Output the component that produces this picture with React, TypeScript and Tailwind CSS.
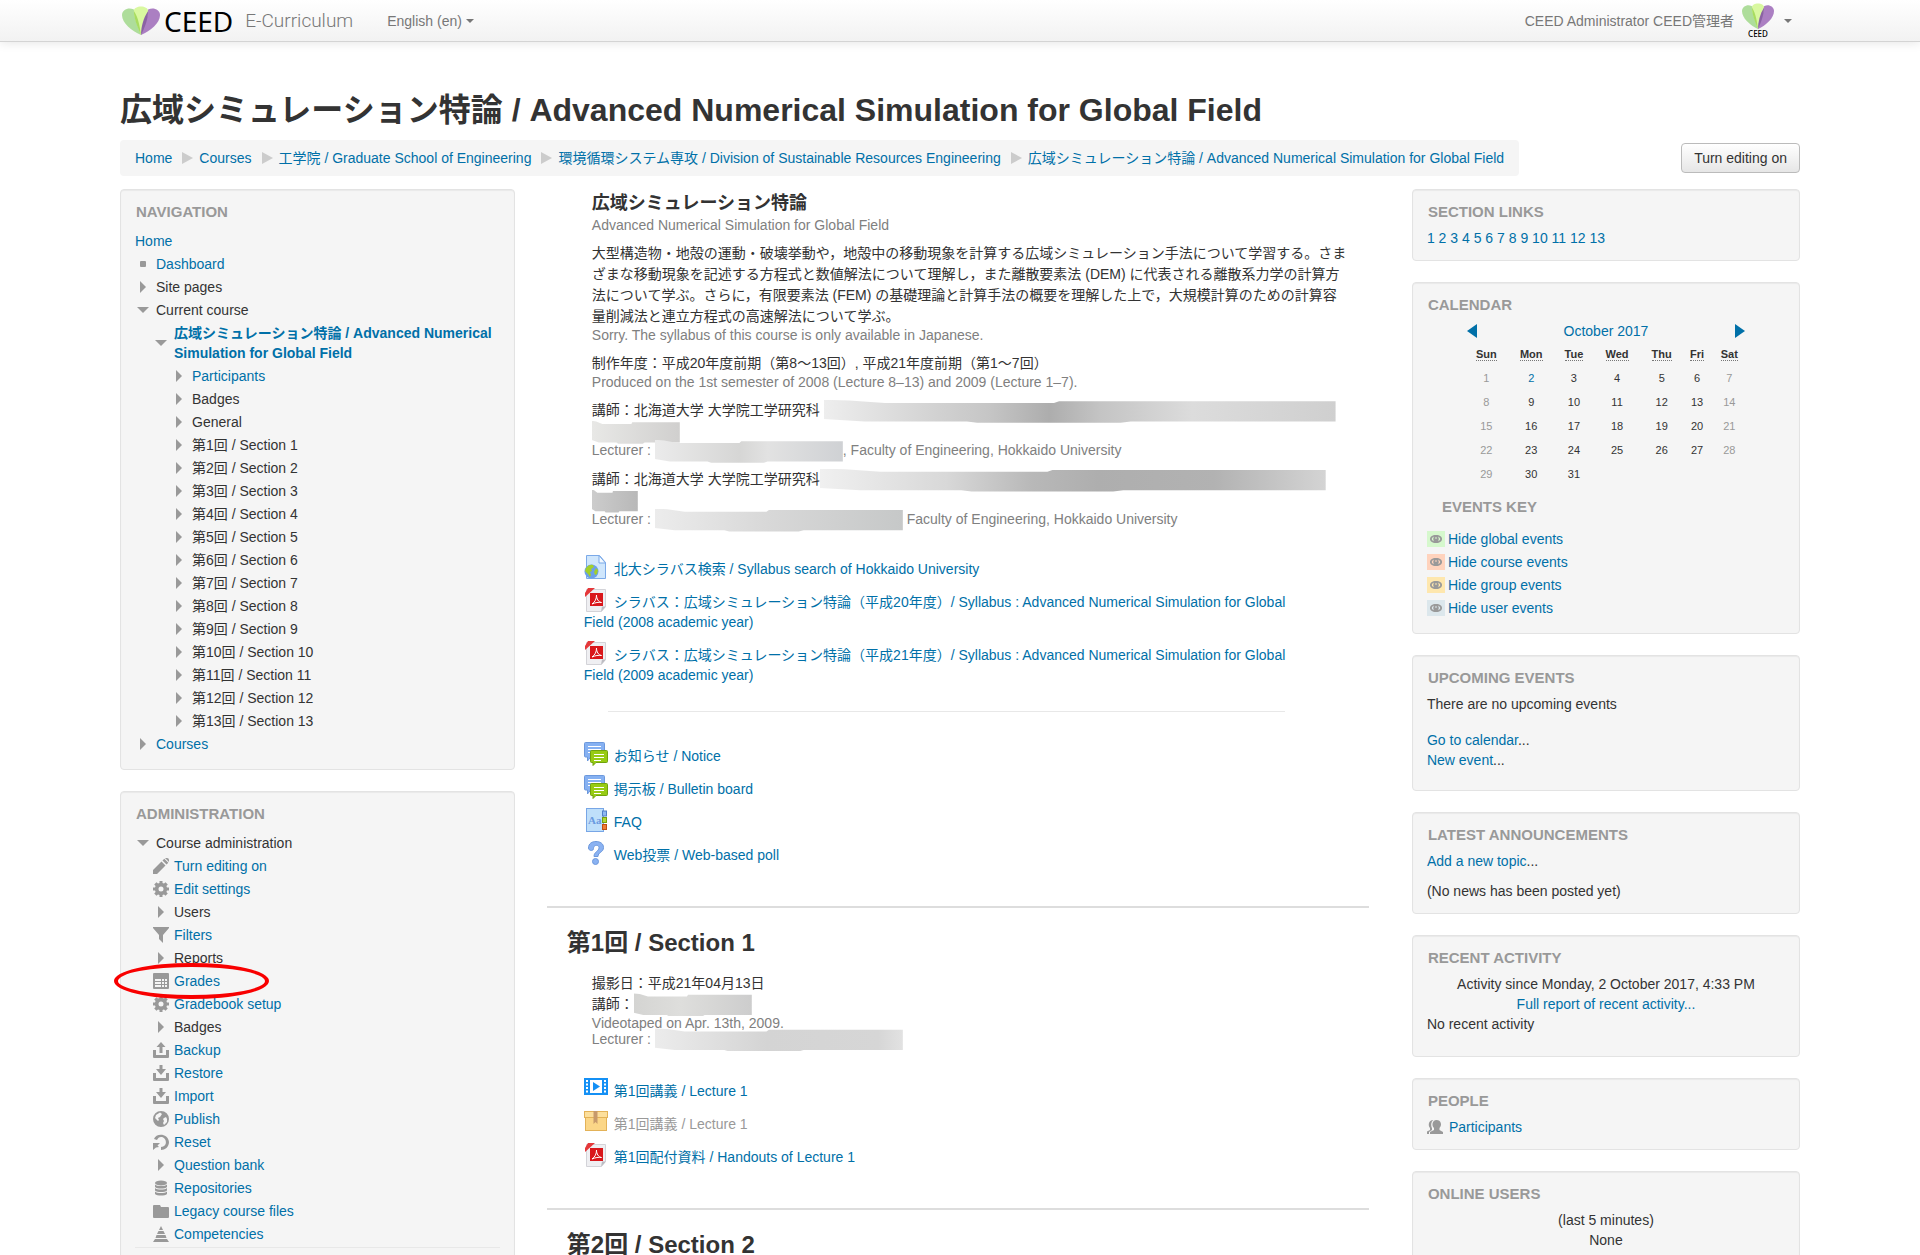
import type { ReactNode } from "react";

const LINK = "text-[#0070a8] hover:underline";

const JP_TITLE = "広域シミュレーション特論";

const CRUMBS = [
  "Home",
  "Courses",
  "工学院 / Graduate School of Engineering",
  "環境循環システム専攻 / Division of Sustainable Resources Engineering",
  "広域シミュレーション特論 / Advanced Numerical Simulation for Global Field",
];

const ADMIN_ITEMS: { icon: IconName; label: string; plain?: boolean }[] = [
  { icon: "pencil", label: "Turn editing on" },
  { icon: "gear", label: "Edit settings" },
  { icon: "right", label: "Users", plain: true },
  { icon: "filter", label: "Filters" },
  { icon: "right", label: "Reports", plain: true },
  { icon: "grid", label: "Grades" },
  { icon: "gear", label: "Gradebook setup" },
  { icon: "right", label: "Badges", plain: true },
  { icon: "upload", label: "Backup" },
  { icon: "download", label: "Restore" },
  { icon: "download", label: "Import" },
  { icon: "globe", label: "Publish" },
  { icon: "reset", label: "Reset" },
  { icon: "right", label: "Question bank" },
  { icon: "database", label: "Repositories" },
  { icon: "folder", label: "Legacy course files" },
  { icon: "pyramid", label: "Competencies" },
];

const WEEKDAYS = ["Sun", "Mon", "Tue", "Wed", "Thu", "Fri", "Sat"];
const WEEKS = [0, 1, 2, 3, 4].map((w) =>
  [1, 2, 3, 4, 5, 6, 7].map((d) => w * 7 + d),
);

const EVENT_KEYS = [
  { label: "Hide global events", color: "bg-[#d6f8cd]" },
  { label: "Hide course events", color: "bg-[#ffd3bd]" },
  { label: "Hide group events", color: "bg-[#fee7ae]" },
  { label: "Hide user events", color: "bg-[#dce7ec]" },
];

type IconName =
  | "right"
  | "down"
  | "square"
  | "pencil"
  | "gear"
  | "filter"
  | "grid"
  | "upload"
  | "download"
  | "globe"
  | "reset"
  | "database"
  | "folder"
  | "pyramid"
  | "people"
  | "eye";

const ICONS: Record<IconName, ReactNode> = {
  right: <path d="M5 2l6 6-6 6z" />,
  down: <path d="M2 5h12l-6 6z" />,
  square: <rect x="5" y="5" width="6" height="6" rx="1" />,
  pencil: (
    <path d="M0 16v-4l8.500-8.500 4 4L4 16zM9.500 2.500l1.800-1.800 4 4-1.800 1.800zM12 0h2a2 2 0 0 1 2 2v2z" />
  ),
  gear: (
    <path
      fillRule="evenodd"
      d="M6.500 0h3v2l1.500.6L12.500 1.200l2.300 2.300-1.400 1.500.6 1.500h2v3h-2l-.6 1.500 1.400 1.500-2.300 2.300-1.500-1.400-1.500.6v2h-3v-2L5 13.400l-1.500 1.400-2.300-2.300L2.600 11 2 9.500H0v-3h2L2.600 5 1.200 3.500l2.300-2.300L5 2.600 6.500 2zM8 5.500a2.500 2.500 0 1 0 0 5 2.500 2.500 0 0 0 0-5z"
    />
  ),
  filter: <path d="M0 0h16v1l-6 7v8l-4-4V8L0 1z" />,
  grid: (
    <path
      fillRule="evenodd"
      d="M1 0h14a1 1 0 0 1 1 1v14a1 1 0 0 1-1 1H1a1 1 0 0 1-1-1V1a1 1 0 0 1 1-1zM2 6v2h6V6zm7 0v2h2V6zm3 0v2h2V6zM2 9v2h6V9zm7 0v2h2V9zm3 0v2h2V9zM2 12v2h6v-2zm7 0v2h2v-2zm3 0v2h2v-2z"
    />
  ),
  upload: (
    <path d="M8 0l4.500 5H9.500v6h-3V5h-3zM0 8h3v5h10V8h3v7a1 1 0 0 1-1 1H1a1 1 0 0 1-1-1z" />
  ),
  download: (
    <path d="M6.500 0h3v4h3.500l-5 6-5-6h3.500zM0 8h3v5h10V8h3v7a1 1 0 0 1-1 1H1a1 1 0 0 1-1-1z" />
  ),
  globe: (
    <path
      fillRule="evenodd"
      d="M8 0a8 8 0 1 1 0 16A8 8 0 0 1 8 0zM3 4l4-2.500L9 3 7 6 5 7l1 2-1 1-3-3zm10 2l1 2v3l-3 3-1-2 1-2-1-2 1-1z"
    />
  ),
  reset: (
    <path d="M1 5C3-1 15-1 16 8c0 5-4 8-8 8v-3c7 0 6-10 0-10-2 0-3 1-4 3zM0 9h7l-2.500 2.500L6 13l-3 .5L0 16z" />
  ),
  database: (
    <g>
      <ellipse cx="8" cy="3" rx="6" ry="2.500" />
      <path d="M2 4.500c2 2 10 2 12 0v2.500c-2 2-10 2-12 0zM2 8c2 2 10 2 12 0v2.500c-2 2-10 2-12 0zM2 11.500c2 2 10 2 12 0V14c-2 2-10 2-12 0z" />
    </g>
  ),
  folder: (
    <path d="M0 3a1 1 0 0 1 1-1h6l1 2h7a1 1 0 0 1 1 1v9a1 1 0 0 1-1 1H1a1 1 0 0 1-1-1z" />
  ),
  pyramid: (
    <path d="M8 0l2 4H6zM5.500 5h5l1.500 3H4zM3.500 9h9l1 3h-11zM2 13h12l2 3H0z" />
  ),
  people: (
    <g>
      <path d="M0 15v-2.500L3 11V9C1 7 1 1 6.500 1 3.500 3 4 7 5 9v2l-3 2v2z" />
      <path d="M3 15v-2l4-2V9C4.500 7 5 1 9.500 1s6 5 3 8v2l3.500 2v2z" />
    </g>
  ),
  eye: (
    <path
      fillRule="evenodd"
      d="M8 4c4 0 6 2 6 4s-2 4-6 4-6-2-6-4 2-4 6-4zM6 5.800C4.500 6.200 3.800 7 3.800 8s.7 1.800 2.200 2.200C5 9 5 7 6 5.800zm4 0c1 1.200 1 3.200 0 4.400 1.500-.4 2.200-1.200 2.200-2.200S11.500 6.200 10 5.800zM7.500 6v2h1V6z"
    />
  ),
};

function Icon({ name }: { name: IconName }) {
  return (
    <svg viewBox="0 0 16 16" className="size-4 shrink-0 fill-[#999]" aria-hidden>
      {ICONS[name]}
    </svg>
  );
}

function Petals({ className }: { className: string }) {
  return (
    <svg
      viewBox="0 0 32 29"
      preserveAspectRatio="none"
      className={className}
      aria-hidden
    >
      <path d="M16 29C8 25 0 17 0 9c0-7 9-9 12-3 2 5 4 15 4 23z" fill="#aedd9b" />
      <path d="M16 29c8-4 16-12 16-20 0-7-9-9-12-3-2 5-4 15-4 23z" fill="#ab7fc2" />
      <path d="M16 29C13 20 10 11 10 5c0-6 12-6 12 0 0 6-4 15-6 24z" fill="#d9f8a0" />
      <path d="M10 5c0 7 3 16 6 24-1-8-2-17-6-24z" fill="#a8dc60" />
      <path d="M22 5c-4 7-6 16-6 24 3-7 6-16 6-24z" fill="#8b62a4" />
    </svg>
  );
}

type ActivityName =
  | "url"
  | "pdf"
  | "forum"
  | "glossary"
  | "choice"
  | "video"
  | "box";

const ACTIVITY_ICONS: Record<ActivityName, ReactNode> = {
  url: (
    <g>
      <path d="M2.500.5h13l6 7v16h-19z" fill="#cfe6fc" stroke="#7ba9e8" />
      <path d="M15 .5V8h6.500z" fill="#f2f9ff" stroke="#7ba9e8" />
      <circle cx="7.500" cy="16.500" r="7" fill="#6ba0ea" />
      <path
        d="M2 13c2-3 5-4 7-3l1 2-3 2 1 2-2 1 1 3-1 2-2-3-3-3zM12 13l2 2-1 4-2 1-1-3z"
        fill="#a3cf2a"
      />
    </g>
  ),
  pdf: (
    <g>
      <path d="M2.500 1.500h19v17l-4 5h-15z" fill="#efeff2" stroke="#d3d3d8" />
      <path d="M17 23.500l1-5h4z" fill="#bcbcc2" />
      <path d="M4 0h7L1 9V5z" fill="#e5383a" />
      <rect x="6" y="5" width="13" height="13" fill="#d9171b" />
      <path
        d="M8 16c3-2 4.500-5 4.500-9 0 4 2 7 5 7.500-3-.5-6 0-9.500 1.500z"
        fill="none"
        stroke="#fff"
      />
    </g>
  ),
  forum: (
    <g>
      <path
        d="M1.500.5h18a1 1 0 0 1 1 1v13H7L3.500 19v-4H1.500a1 1 0 0 1-1-1V1.500a1 1 0 0 1 1-1z"
        fill="#86b1f2"
        stroke="#6c98dc"
      />
      <path d="M4 4.500h13M4 7.500h13M4 10.500h6" stroke="#fff" />
      <path
        d="M7.500 8.500h15a1 1 0 0 1 1 1v10a1 1 0 0 1-1 1H12L9 23.500v-3H7.500a1 1 0 0 1-1-1v-10a1 1 0 0 1 1-1z"
        fill="#97cb13"
        stroke="#70a30c"
      />
      <path d="M10 12.500h10M10 15.500h10M10 18.500h7" stroke="#fff" />
    </g>
  ),
  glossary: (
    <g>
      <rect x="2.500" y=".5" width="17" height="23" fill="#bfdffa" stroke="#78a6e6" />
      <rect x="18.500" y="3" width="4" height="5" fill="#8fb8f3" stroke="#527fc8" />
      <rect x="18.500" y="9.500" width="4" height="5" fill="#b2d835" stroke="#74a010" />
      <rect x="18.500" y="16.500" width="4" height="5" fill="#ee7b36" stroke="#c04e10" />
      <text
        x="4"
        y="16"
        fontSize="11"
        fontWeight="700"
        fontFamily="Liberation Serif, serif"
        fill="#6a9ae0"
      >
        Aa
      </text>
    </g>
  ),
  choice: (
    <g fill="#8ab2f2" stroke="#6c98dc">
      <path d="M4.500 7C4.500 2.500 8 .5 12 .5s7.500 2 7.500 6c0 5-5.500 4.500-5.500 9h-4c0-5 5-5 5-9 0-3-5.500-3-5.500 1 0 3-5 2.500-5-.5z" />
      <circle cx="11.500" cy="20.500" r="3" />
    </g>
  ),
  video: (
    <g>
      <rect y="1" width="24" height="17" fill="#1490f5" />
      <rect x="6" y="3" width="12" height="13" fill="#fff" />
      <path d="M9 5l7 4.500L9 14z" fill="#1490f5" />
      <path
        d="M3 3v13M21 3v13"
        stroke="#fff"
        strokeWidth="2"
        strokeDasharray="2 1.500"
      />
    </g>
  ),
  box: (
    <g>
      <rect x="1.500" y="6" width="21" height="14.500" fill="#fbd687" stroke="#e3b258" />
      <rect x=".5" y="1.500" width="23" height="6" fill="#fcdf9c" stroke="#e3b258" />
      <path d="M9.500 1h4v13l-2-2-2 2z" fill="#c79a6b" />
    </g>
  ),
};

function Activity({
  icon,
  label,
  dimmed,
}: {
  icon: ActivityName;
  label: string;
  dimmed?: boolean;
}) {
  return (
    <li className="pb-[9px]">
      <a href="#" className={dimmed ? "text-[#999]" : LINK}>
        <svg
          viewBox="0 0 24 24"
          className="mr-[6px] inline-block size-6 align-[-5px]"
          aria-hidden
        >
          {ACTIVITY_ICONS[icon]}
        </svg>
        {label}
      </a>
    </li>
  );
}

function Block({
  title,
  className = "",
  children,
}: {
  title: string;
  className?: string;
  children: ReactNode;
}) {
  return (
    <section
      className={`rounded border border-[#e3e3e3] bg-[#f5f5f5] px-[14px] pt-3 shadow-[inset_0_1px_1px_rgba(0,0,0,0.05)] ${className}`}
    >
      <h2 className="pl-px text-[15px] leading-5 font-bold text-[#999] uppercase">
        {title}
      </h2>
      {children}
    </section>
  );
}

function TreeItem({
  icon,
  label,
  link,
  bold,
}: {
  icon: IconName;
  label: string;
  link?: boolean;
  bold?: boolean;
}) {
  return (
    <div className="flex items-center gap-[5px] pb-[3px]">
      <Icon name={icon} />
      {link ? (
        <a href="#" className={bold ? "font-bold text-[#0070a8]" : LINK}>
          {label}
        </a>
      ) : (
        <span>{label}</span>
      )}
    </div>
  );
}

// Smudge that hides a personal name
function Redacted({ className }: { className: string }) {
  return (
    <span
      className={`-my-1 inline-block h-[23px] align-middle [clip-path:polygon(0_0,5%_3%,12%_14%,45%_14%,46%_6%,100%_6%,100%_94%,60%_94%,58%_100%,30%_100%,28%_94%,8%_94%,0_84%)] ${className}`}
    />
  );
}

function Header() {
  return (
    <header className="border-b border-[#d4d4d4] bg-linear-to-b from-white to-[#f2f2f2] px-[120px] text-[#777] shadow-[0_1px_10px_rgba(0,0,0,0.1)]">
      <div className="flex h-[41px] items-center">
        <a href="#" className="flex items-center pl-[2px]">
          <Petals className="mr-1 h-[29px] w-[38px]" />
          <span className="font-['Noto_Sans'] text-[28px] leading-8 text-black">
            CEED
          </span>
          <span className="ml-3 font-['Roboto'] text-[19px] font-light">
            E-Curriculum
          </span>
        </a>
        <button className="ml-[34px] flex items-center gap-1">
          English (en)
          <span className="border-x-4 border-t-4 border-x-transparent border-t-[#777]" />
        </button>
        <button className="ml-auto flex items-center pr-2">
          CEED Administrator CEED管理者
          <span className="ml-2 flex w-8 flex-col items-center">
            <Petals className="h-[26px] w-8" />
            <span className="font-['Noto_Sans'] text-[8px] leading-[10px] font-medium text-black">
              CEED
            </span>
          </span>
          <span className="ml-[10px] border-x-4 border-t-4 border-x-transparent border-t-[#777]" />
        </button>
      </div>
    </header>
  );
}

function Navigation() {
  return (
    <Block title="Navigation" className="pb-3">
      <nav className="pt-[9px]">
        <a href="#" className={`block pb-[3px] ${LINK}`}>
          Home
        </a>
        <TreeItem icon="square" label="Dashboard" link />
        <TreeItem icon="right" label="Site pages" />
        <TreeItem icon="down" label="Current course" />
        <div className="pl-[18px]">
          <TreeItem
            icon="down"
            label={`${JP_TITLE} / Advanced Numerical Simulation for Global Field`}
            link
            bold
          />
          <div className="pl-[18px]">
            <TreeItem icon="right" label="Participants" link />
            <TreeItem icon="right" label="Badges" />
            <TreeItem icon="right" label="General" />
            {Array.from({ length: 13 }, (_, i) => (
              <TreeItem
                key={i}
                icon="right"
                label={`第${i + 1}回 / Section ${i + 1}`}
              />
            ))}
          </div>
        </div>
        <TreeItem icon="right" label="Courses" link />
      </nav>
    </Block>
  );
}

function Administration() {
  return (
    <Block title="Administration" className="pb-10">
      <div className="pt-[9px]">
        <TreeItem icon="down" label="Course administration" />
        <div className="pl-[18px]">
          {ADMIN_ITEMS.map((item) => (
            <div key={item.label} className="relative">
              <TreeItem icon={item.icon} label={item.label} link={!item.plain} />
              {item.label === "Grades" && (
                <span className="absolute -top-2 -left-[39px] z-10 h-9 w-[155px] rounded-[50%] border-4 border-[#f80000]" />
              )}
            </div>
          ))}
        </div>
        <hr className="border-[#e8e8e8]" />
      </div>
    </Block>
  );
}

function Calendar() {
  return (
    <Block title="Calendar" className="pb-3">
      <div className="pt-[6px] pr-[38px] pl-[38px]">
        <div className="flex items-center justify-between px-[2px] pb-px">
          <a
            href="#"
            aria-label="Previous month"
            className="border-y-[7px] border-r-[10px] border-y-transparent border-r-[#0070a8]"
          />
          <a href="#" className={LINK}>
            October 2017
          </a>
          <a
            href="#"
            aria-label="Next month"
            className="border-y-[7px] border-l-[10px] border-y-transparent border-l-[#0070a8]"
          />
        </div>
        <table className="w-full text-center text-[11px]">
          <thead>
            <tr>
              {WEEKDAYS.map((day) => (
                <th key={day} className="h-6 font-bold">
                  <abbr
                    title={day}
                    className="border-b border-dotted border-[#777] no-underline"
                  >
                    {day}
                  </abbr>
                </th>
              ))}
            </tr>
          </thead>
          <tbody>
            {WEEKS.map((week) => (
              <tr key={week[0]}>
                {week.map((day, i) => (
                  <td
                    key={day}
                    className={`h-6 ${i === 0 || i === 6 ? "text-[#999]" : ""}`}
                  >
                    {day === 2 ? (
                      <a href="#" className={LINK}>
                        2
                      </a>
                    ) : (
                      day <= 31 && day
                    )}
                  </td>
                ))}
              </tr>
            ))}
          </tbody>
        </table>
      </div>
      <h3 className="pt-[11px] pl-[15px] text-[15px] leading-5 font-bold text-[#999]">
        EVENTS KEY
      </h3>
      <ul className="pt-3">
        {EVENT_KEYS.map((key) => (
          <li key={key.label} className="flex items-center gap-[3px] pb-[3px]">
            <span className={`px-px ${key.color}`}>
              <Icon name="eye" />
            </span>
            <a href="#" className={LINK}>
              {key.label}
            </a>
          </li>
        ))}
      </ul>
    </Block>
  );
}

function SideBlocks() {
  return (
    <aside className="flex w-[23.1%] shrink-0 flex-col gap-[21px]">
      <Block title="Section links" className="pb-3">
        <p className="pt-[6px]">
          {Array.from({ length: 13 }, (_, i) => (
            <span key={i}>
              <a href="#" className={LINK}>
                {i + 1}
              </a>{" "}
            </span>
          ))}
        </p>
      </Block>
      <Calendar />
      <Block title="Upcoming events" className="pb-5">
        <p className="pt-[6px] pb-4">There are no upcoming events</p>
        <p>
          <a href="#" className={LINK}>
            Go to calendar
          </a>
          ...
        </p>
        <p>
          <a href="#" className={LINK}>
            New event
          </a>
          ...
        </p>
      </Block>
      <Block title="Latest announcements" className="pb-3">
        <p className="pt-[6px] pb-[10px]">
          <a href="#" className={LINK}>
            Add a new topic
          </a>
          ...
        </p>
        <p>(No news has been posted yet)</p>
      </Block>
      <Block title="Recent activity" className="pb-[22px]">
        <p className="pt-[6px] text-center">
          Activity since Monday, 2 October 2017, 4:33 PM
        </p>
        <p className="text-center">
          <a href="#" className={LINK}>
            Full report of recent activity...
          </a>
        </p>
        <p>No recent activity</p>
      </Block>
      <Block title="People" className="pb-3">
        <p className="flex items-center gap-[6px] pt-[6px]">
          <Icon name="people" />
          <a href="#" className={LINK}>
            Participants
          </a>
        </p>
      </Block>
      <Block title="Online users" className="pb-3">
        <p className="pt-[6px] text-center">(last 5 minutes)</p>
        <p className="text-center">None</p>
      </Block>
    </aside>
  );
}

function English({ children }: { children: ReactNode }) {
  return <p className="leading-4 text-[#808080]">{children}</p>;
}

function Summary({ children }: { children: ReactNode }) {
  return (
    <div className="space-y-[10px] pr-5 pl-[45px] leading-[21px]">
      {children}
    </div>
  );
}

function CourseContent() {
  return (
    <main className="mr-[43px] ml-8 min-w-0 flex-1">
      <section className="border-b-2 border-[#ddd] pb-8">
        <Summary>
          <div>
            <h3 className="text-lg leading-7 font-bold">{JP_TITLE}</h3>
            <English>Advanced Numerical Simulation for Global Field</English>
          </div>
          <div>
            <p>
              大型構造物・地殻の運動・破壊挙動や，地殻中の移動現象を計算する広域シミュレーション手法について学習する。さまざまな移動現象を記述する方程式と数値解法について理解し，また離散要素法
              (DEM)
              に代表される離散系力学の計算方法について学ぶ。さらに，有限要素法
              (FEM)
              の基礎理論と計算手法の概要を理解した上で，大規模計算のための計算容量削減法と連立方程式の高速解法について学ぶ。
            </p>
            <English>
              Sorry. The syllabus of this course is only available in Japanese.
            </English>
          </div>
          <div>
            <p>制作年度：平成20年度前期（第8〜13回）, 平成21年度前期（第1〜7回）</p>
            <English>
              Produced on the 1st semester of 2008 (Lecture 8–13) and 2009
              (Lecture 1–7).
            </English>
          </div>
          <div>
            <p>
              講師：北海道大学 大学院工学研究科{" "}
              <Redacted className="w-[512px] bg-[linear-gradient(90deg,#eee,#d4d4d4_20%,#c6c6c6_32%,#adadad_44%,#c4c4c4_54%,#dcdcdc_72%,#cfcfcf)]" />
              <br />
              <Redacted className="w-[88px] bg-[linear-gradient(90deg,#e8e8e6,#d0cfce)]" />
            </p>
            <English>
              Lecturer :{" "}
              <Redacted className="w-[188px] bg-[linear-gradient(90deg,#ebebeb,#d6d6d5_45%,#e2e2e2_60%,#cfd1d4)]" />
              , Faculty of Engineering, Hokkaido University
            </English>
          </div>
          <div>
            <p>
              講師：北海道大学 大学院工学研究科
              <Redacted className="w-[506px] bg-[linear-gradient(90deg,#f0f0f0,#d8d8d8_25%,#b8b8b8_42%,#aeaeae_55%,#b2b2b2_78%,#d4d4d4)]" />
              <br />
              <Redacted className="w-[46px] bg-[linear-gradient(90deg,#ccc,#b8b8b8)]" />
            </p>
            <English>
              Lecturer :{" "}
              <Redacted className="w-[248px] bg-[linear-gradient(90deg,#ececec,#d8d8d8_45%,#c6c8c8)]" />{" "}
              Faculty of Engineering, Hokkaido University
            </English>
          </div>
        </Summary>
        <ul className="pt-[27px] pr-16 pl-[37px]">
          <Activity
            icon="url"
            label="北大シラバス検索 / Syllabus search of Hokkaido University"
          />
          <Activity
            icon="pdf"
            label="シラバス：広域シミュレーション特論（平成20年度）/ Syllabus : Advanced Numerical Simulation for Global Field (2008 academic year)"
          />
          <Activity
            icon="pdf"
            label="シラバス：広域シミュレーション特論（平成21年度）/ Syllabus : Advanced Numerical Simulation for Global Field (2009 academic year)"
          />
          <li className="pt-[17px] pr-5 pb-[30px] pl-6">
            <hr className="border-[#e8e8e8]" />
          </li>
          <Activity icon="forum" label="お知らせ / Notice" />
          <Activity icon="forum" label="掲示板 / Bulletin board" />
          <Activity icon="glossary" label="FAQ" />
          <Activity icon="choice" label="Web投票 / Web-based poll" />
        </ul>
      </section>
      <section className="border-b-2 border-[#ddd] pb-8">
        <h3 className="pt-[15px] pb-[10px] pl-5 text-2xl leading-10 font-bold">
          第1回 / Section 1
        </h3>
        <Summary>
          <div>
            <p>
              撮影日：平成21年04月13日
              <br />
              講師：
              <Redacted className="w-[118px] bg-[linear-gradient(90deg,#d4d4d2,#dededc_40%,#cdcdcd)]" />
            </p>
            <English>
              Videotaped on Apr. 13th, 2009.
              <br />
              Lecturer :{" "}
              <Redacted className="w-[248px] bg-[linear-gradient(90deg,#ececec,#d4d4d4_45%,#d6d6d6_90%,#e2e2e2)]" />
            </English>
          </div>
        </Summary>
        <ul className="pt-[30px] pr-16 pl-[37px]">
          <Activity icon="video" label="第1回講義 / Lecture 1" />
          <Activity icon="box" label="第1回講義 / Lecture 1" dimmed />
          <Activity icon="pdf" label="第1回配付資料 / Handouts of Lecture 1" />
        </ul>
      </section>
      <section>
        <h3 className="pt-[15px] pb-[10px] pl-5 text-2xl leading-10 font-bold">
          第2回 / Section 2
        </h3>
      </section>
    </main>
  );
}

export default function App() {
  return (
    <div className="min-h-screen bg-white font-['Liberation_Sans','Noto_Sans_CJK_JP',sans-serif] text-sm leading-5 text-[#333]">
      <Header />
      <div className="px-[120px]">
        <h1 className="pt-12 text-[32px] leading-10 font-bold">
          {JP_TITLE} / Advanced Numerical Simulation for Global Field
        </h1>
        <div className="mb-[13px] flex items-center justify-between pt-[10px]">
          <nav className="flex rounded bg-[#f5f5f5] px-[15px] py-2">
            {CRUMBS.map((crumb, i) => (
              <span key={crumb} className="flex items-center">
                {i > 0 && (
                  <span className="mr-[6px] ml-[10px] border-y-[6px] border-l-[11px] border-y-transparent border-l-[#ccc]" />
                )}
                <a href="#" className={LINK}>
                  {crumb}
                </a>
              </span>
            ))}
          </nav>
          <button className="rounded border border-[#bbb] bg-linear-to-b from-white to-[#e6e6e6] px-3 py-1">
            Turn editing on
          </button>
        </div>
        <div className="flex items-start">
          <aside className="flex w-[23.5%] shrink-0 flex-col gap-[21px]">
            <Navigation />
            <Administration />
          </aside>
          <CourseContent />
          <SideBlocks />
        </div>
      </div>
    </div>
  );
}
